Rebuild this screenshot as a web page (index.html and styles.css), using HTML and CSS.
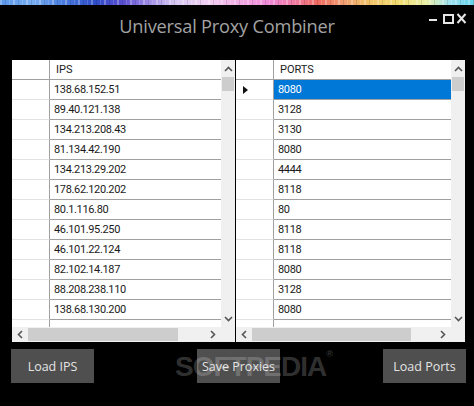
FILE: index.html
```html
<!DOCTYPE html>
<html>
<head>
<meta charset="utf-8">
<link rel="stylesheet" href="styles.css">
</head>
<body>
<div class="window">
  <div class="strip"></div>
  <div class="titlebar">
    <div></div>
    <div class="title">Universal Proxy Combiner</div>
    <div class="controls">
      <svg width="40" height="12" viewBox="0 0 40 12">
        <rect x="1" y="6" width="8" height="2" fill="#e6e6e6"/>
        <rect x="16" y="2" width="9" height="8" fill="none" stroke="#e6e6e6" stroke-width="2"/>
        <path d="M29.5 1 L37.5 10 M37.5 1 L29.5 10" stroke="#e6e6e6" stroke-width="2"/>
      </svg>
    </div>
  </div>

  <div class="grids">
    <div class="grid grid-ips">
      <div class="table">
        <div class="row head"><div class="rh"></div><div class="cell">IPS</div></div>
        <div class="row"><div class="rh"></div><div class="cell">138.68.152.51</div></div>
        <div class="row"><div class="rh"></div><div class="cell">89.40.121.138</div></div>
        <div class="row"><div class="rh"></div><div class="cell">134.213.208.43</div></div>
        <div class="row"><div class="rh"></div><div class="cell">81.134.42.190</div></div>
        <div class="row"><div class="rh"></div><div class="cell">134.213.29.202</div></div>
        <div class="row"><div class="rh"></div><div class="cell">178.62.120.202</div></div>
        <div class="row"><div class="rh"></div><div class="cell">80.1.116.80</div></div>
        <div class="row"><div class="rh"></div><div class="cell">46.101.95.250</div></div>
        <div class="row"><div class="rh"></div><div class="cell">46.101.22.124</div></div>
        <div class="row"><div class="rh"></div><div class="cell">82.102.14.187</div></div>
        <div class="row"><div class="rh"></div><div class="cell">88.208.238.110</div></div>
        <div class="row"><div class="rh"></div><div class="cell">138.68.130.200</div></div>
        <div class="row"><div class="rh"></div><div class="cell"></div></div>
      </div>
      <div class="vscroll">
        <div class="arrow"><svg width="9" height="6" viewBox="0 0 9 6"><path d="M1 5 L4.5 1.5 L8 5" fill="none" stroke="#555" stroke-width="1.6"/></svg></div>
        <div class="vthumb"></div>
        <div class="vtrack"></div>
        <div class="arrow"><svg width="9" height="6" viewBox="0 0 9 6"><path d="M1 1 L4.5 4.5 L8 1" fill="none" stroke="#555" stroke-width="1.6"/></svg></div>
      </div>
      <div class="hscroll">
        <div class="harrow"><svg width="6" height="9" viewBox="0 0 6 9"><path d="M5 1 L1.5 4.5 L5 8" fill="none" stroke="#555" stroke-width="1.6"/></svg></div>
        <div class="hthumb thumb-ips"></div>
        <div class="htrack"></div>
        <div class="harrow"><svg width="6" height="9" viewBox="0 0 6 9"><path d="M1 1 L4.5 4.5 L1 8" fill="none" stroke="#555" stroke-width="1.6"/></svg></div>
      </div>
      <div class="corner"></div>
    </div>

    <div class="grid grid-ports">
      <div class="table">
        <div class="row head"><div class="rh"></div><div class="cell">PORTS</div></div>
        <div class="row"><div class="rh"><span class="pointer"></span></div><div class="cell selected">8080</div></div>
        <div class="row"><div class="rh"></div><div class="cell">3128</div></div>
        <div class="row"><div class="rh"></div><div class="cell">3130</div></div>
        <div class="row"><div class="rh"></div><div class="cell">8080</div></div>
        <div class="row"><div class="rh"></div><div class="cell">4444</div></div>
        <div class="row"><div class="rh"></div><div class="cell">8118</div></div>
        <div class="row"><div class="rh"></div><div class="cell">80</div></div>
        <div class="row"><div class="rh"></div><div class="cell">8118</div></div>
        <div class="row"><div class="rh"></div><div class="cell">8118</div></div>
        <div class="row"><div class="rh"></div><div class="cell">8080</div></div>
        <div class="row"><div class="rh"></div><div class="cell">3128</div></div>
        <div class="row"><div class="rh"></div><div class="cell">8080</div></div>
        <div class="row"><div class="rh"></div><div class="cell"></div></div>
      </div>
      <div class="vscroll">
        <div class="arrow"><svg width="9" height="6" viewBox="0 0 9 6"><path d="M1 5 L4.5 1.5 L8 5" fill="none" stroke="#555" stroke-width="1.6"/></svg></div>
        <div class="vthumb"></div>
        <div class="vtrack"></div>
        <div class="arrow"><svg width="9" height="6" viewBox="0 0 9 6"><path d="M1 1 L4.5 4.5 L8 1" fill="none" stroke="#555" stroke-width="1.6"/></svg></div>
      </div>
      <div class="hscroll">
        <div class="harrow"><svg width="6" height="9" viewBox="0 0 6 9"><path d="M5 1 L1.5 4.5 L5 8" fill="none" stroke="#555" stroke-width="1.6"/></svg></div>
        <div class="hthumb thumb-ports"></div>
        <div class="htrack"></div>
        <div class="harrow"><svg width="6" height="9" viewBox="0 0 6 9"><path d="M1 1 L4.5 4.5 L1 8" fill="none" stroke="#555" stroke-width="1.6"/></svg></div>
      </div>
      <div class="corner"></div>
    </div>
  </div>

  <div class="buttons">
    <div class="btn">Load IPS</div>
    <div class="btn">Save Proxies</div>
    <div class="btn">Load Ports</div>
  </div>

  <div class="watermark">SOFTPEDIA<sup>®</sup></div>
</div>
</body>
</html>
```

FILE: styles.css
```css
* { box-sizing: border-box; }
html, body { margin: 0; padding: 0; }
body {
  background: #000;
  width: 474px;
  height: 406px;
  overflow: hidden;
  font-family: Roboto, "Liberation Sans", sans-serif;
}
.window {
  position: relative;
  width: 474px;
  height: 406px;
  display: flex;
  flex-direction: column;
}
.strip {
  height: 5px;
  background:
    repeating-linear-gradient(90deg, rgba(255,255,255,0.28) 0 2px, transparent 2px 5px, rgba(0,0,0,0.12) 5px 6px, transparent 6px 9px, rgba(255,255,255,0.15) 9px 10px, transparent 10px 13px),
    linear-gradient(90deg, #5a96ec 0%, #78aef2 7%, #4a7ee0 13%, #2e4cc8 20%, #5a4ed0 26%, #9c88e6 31%, #d6c8f2 37%, #f2d0f2 44%, #f2a8e4 51%, #f088d6 57%, #f07898 63%, #f06a60 67%, #f09a70 72%, #f2c46a 78%, #f2dc70 84%, #eaf0a8 90%, #9ee2f2 95%, #62d2ea 100%);
}
.titlebar {
  height: 55px;
  display: grid;
  grid-template-columns: 1fr auto 1fr;
  align-items: start;
}
.title {
  font-family: "Open Sans", "Noto Sans", sans-serif;
  font-size: 18.2px;
  color: #a3a3a3;
  padding-top: 9px;
  margin-right: 20px;
  letter-spacing: -0.2px;
}
.controls {
  justify-self: end;
  padding-top: 8px;
  padding-right: 6px;
  display: flex;
}
.grids {
  display: flex;
  gap: 1px;
  padding-left: 12px;
  height: 282px;
}
.grid {
  background: #fff;
  display: grid;
  grid-template-columns: 1fr 14px;
  grid-template-rows: 1fr 15px;
}
.grid-ips { width: 223px; }
.grid-ports { width: 229px; }
.table {
  overflow: hidden;
  font-size: 11px;
  color: #1a1a1a;
}
.row {
  height: 20px;
  display: grid;
  grid-template-columns: 38px 1fr;
}
.rh {
  border-right: 1px solid #a0a0a0;
  border-bottom: 1px solid #e2e2e2;
  display: flex;
  align-items: center;
  padding-left: 7px;
}
.cell {
  border-bottom: 1px solid #a0a0a0;
  padding-left: 4px;
  display: flex;
  align-items: center;
  letter-spacing: -0.35px;
}
.head .cell { padding-left: 6px; color: #222; letter-spacing: 0; }
.head .rh { border-bottom-color: #a0a0a0; }
.cell.selected {
  background: #0078d7;
  color: #fff;
}
.pointer {
  width: 0;
  height: 0;
  border-top: 4px solid transparent;
  border-bottom: 4px solid transparent;
  border-left: 5px solid #111;
}
.vscroll {
  background: #f0f0f0;
  display: flex;
  flex-direction: column;
}
.arrow {
  height: 17px;
  display: flex;
  align-items: center;
  justify-content: center;
}
.vthumb {
  height: 14px;
  margin: 0 1px;
  background: #cdcdcd;
}
.vtrack { flex: 1; }
.hscroll {
  background: #f0f0f0;
  display: flex;
}
.harrow {
  width: 16px;
  display: flex;
  align-items: center;
  justify-content: center;
}
.hthumb {
  background: #cdcdcd;
  margin: 1px 0;
}
.thumb-ips { width: 150px; }
.thumb-ports { width: 159px; }
.htrack { flex: 1; }
.corner { background: #f0f0f0; }
.buttons {
  display: flex;
  justify-content: space-between;
  padding: 7px 8px 0 11px;
}
.btn {
  width: 83px;
  height: 34px;
  background: #4f4f4f;
  color: #e4e4e4;
  font-family: "Open Sans", "Noto Sans", sans-serif;
  font-size: 12.5px;
  display: flex;
  align-items: center;
  justify-content: center;
}
.watermark {
  position: absolute;
  left: 175px;
  top: 351px;
  font-family: "Liberation Sans", Arial, sans-serif;
  font-weight: bold;
  font-size: 28px;
  letter-spacing: -1px;
  color: rgba(255,255,255,0.2);
  pointer-events: none;
}
.watermark sup {
  font-size: 9px;
  vertical-align: top;
  position: relative;
  top: -2px;
}
```
